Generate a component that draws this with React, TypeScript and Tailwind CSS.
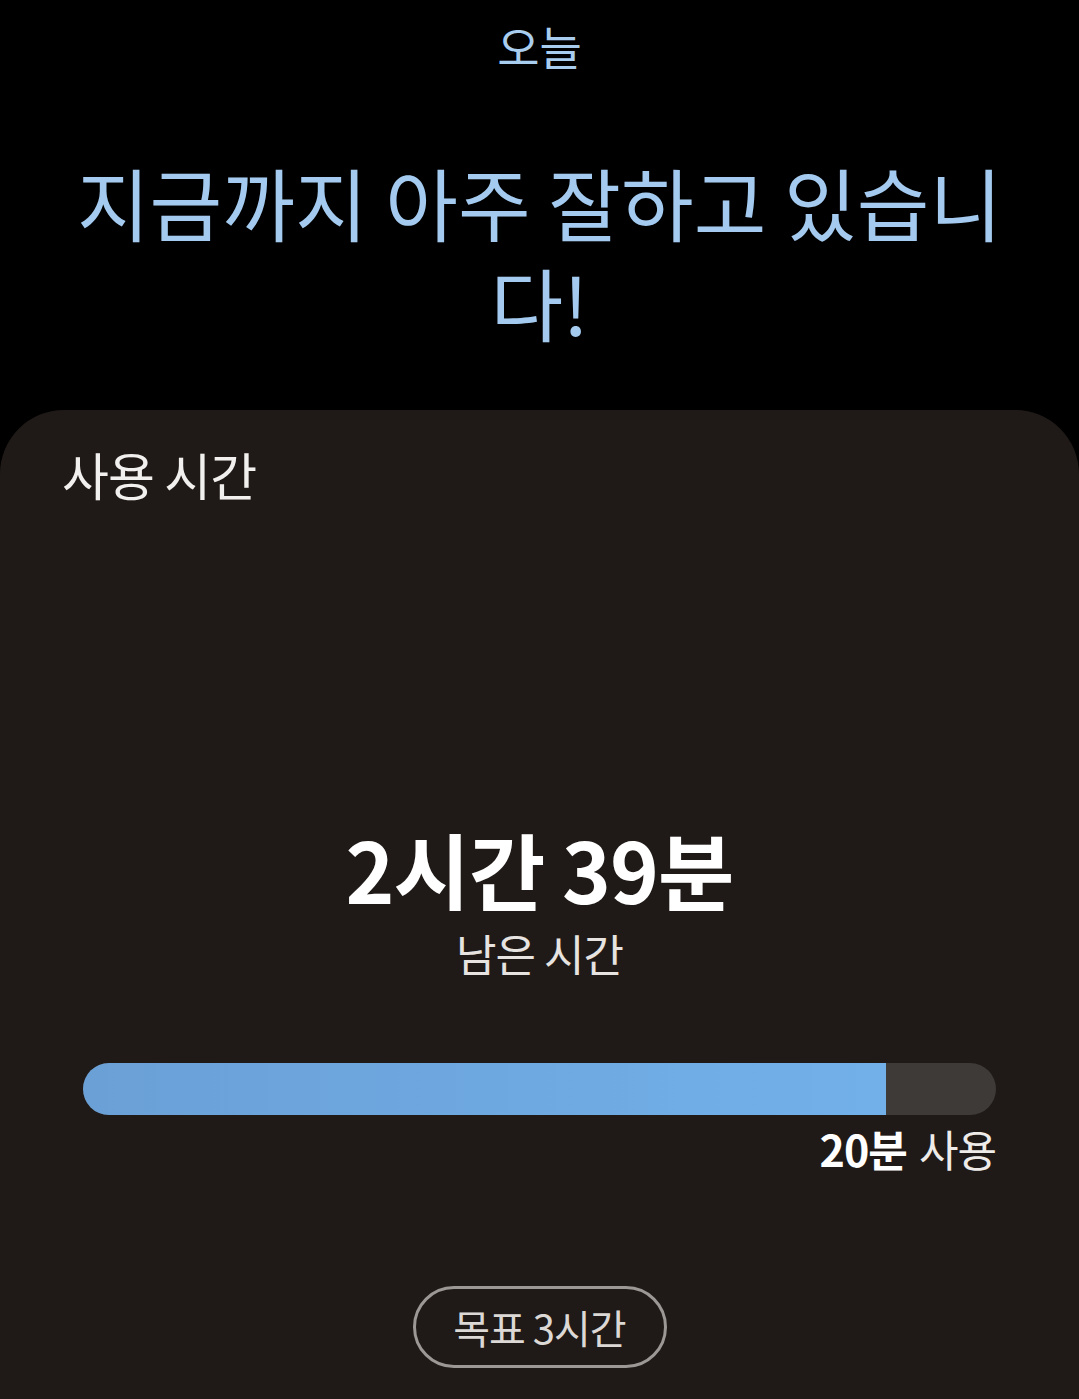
import React from "react";

export default function App() {
  const fill = 0.879;
  return (
    <div
      className="w-[1079px] h-[1399px] bg-black overflow-hidden flex flex-col"
      style={{ fontFamily: '"Noto Sans CJK KR", "Noto Sans", sans-serif' }}
    >
      <div className="flex flex-col items-center shrink-0">
        <div className="mt-[12px] h-[66px] flex items-center text-[46px] leading-none text-[#a9cdee]">오늘</div>
        <div className="mt-[74px] w-[960px] text-center text-[79px] leading-[100px] text-[#a4cbef]">
          지금까지 아주 잘하고 있습니다!
        </div>
      </div>
      <div className="mt-[58px] flex-1 bg-[#1f1a17] rounded-t-[64px] flex flex-col px-[62px] pt-[34px]">
        <div className="text-[51px] leading-[60px] text-[#f2f0ee] tracking-[-1px]">사용 시간</div>
        <div className="mt-[320px] flex flex-col items-center">
          <div className="text-[83px] leading-[88px] font-bold text-white tracking-[-1px]">2시간 39분</div>
          <div className="mt-[17px] text-[44px] leading-[48px] text-[#e6e3e1] tracking-[-1px]">남은 시간</div>
        </div>
        <div className="mt-[86px] mx-[21px]">
          <div className="h-[52px] rounded-full bg-[#3e3a38] overflow-hidden flex">
            <div
              className="h-full bg-gradient-to-r from-[#6aa0d6] to-[#72b0ea]"
              style={{ width: `${fill * 100}%` }}
            />
          </div>
          <div className="mt-[4px] flex justify-end items-baseline text-[43px] leading-[58px] text-white tracking-[-1px]">
            <span className="font-bold">20분</span>
            <span className="ml-[12px] text-[#eeebe9]">사용</span>
          </div>
        </div>
        <div className="mt-[109px] flex justify-center">
          <div className="w-[254px] h-[82px] rounded-full border-[3px] border-[#9c9896] flex items-center justify-center text-[40px] text-[#dcd8d6] tracking-[-1px]">
            목표 3시간
          </div>
        </div>
      </div>
    </div>
  );
}
